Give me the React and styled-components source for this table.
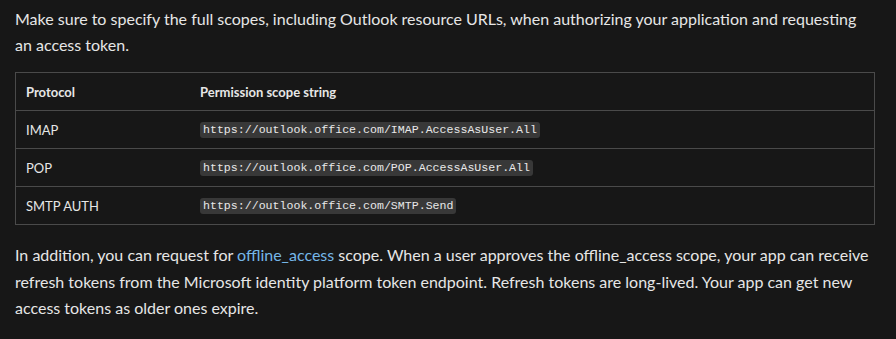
import React from "react";
import styled, { createGlobalStyle } from "styled-components";

const GlobalStyle = createGlobalStyle`
  body {
    margin: 0;
    background: #171717;
    color: #e6e6e6;
    font-family: "Lato", "Liberation Sans", sans-serif;
  }
`;

const Page = styled.main`
  width: 860px;
  padding: 6px 0 0 15px;
`;

const Para = styled.p`
  margin: 0;
  font-size: 16px;
  line-height: ${(p) => p.$lh || "26px"};
`;

const Link = styled.a`
  color: #75b6e7;
  text-decoration: none;
`;

const Table = styled.div`
  display: grid;
  grid-template-columns: 174px 1fr;
  border: 1px solid #4a4a4a;
  border-bottom: none;
  margin: 14px 0 17px;
  font-size: 13px;
`;

const Cell = styled.div`
  display: flex;
  align-items: center;
  height: 37px;
  padding-left: 10px;
  border-bottom: 1px solid #4a4a4a;
  font-weight: ${(p) => (p.$head ? 700 : 400)};
`;

const Code = styled.code`
  font-family: "Liberation Mono", "DejaVu Sans Mono", monospace;
  font-size: 11.6px;
  line-height: 12px;
  padding: 2px 3px;
  background: #383838;
  border-radius: 3px;
  color: #e8e8e8;
`;

const rows = [
  ["IMAP", "https://outlook.office.com/IMAP.AccessAsUser.All"],
  ["POP", "https://outlook.office.com/POP.AccessAsUser.All"],
  ["SMTP AUTH", "https://outlook.office.com/SMTP.Send"],
];

export default function App() {
  return (
    <>
      <GlobalStyle />
      <Page>
        <Para>
          Make sure to specify the full scopes, including Outlook resource URLs, when authorizing
          your application and requesting an access token.
        </Para>
        <Table>
          <Cell $head>Protocol</Cell>
          <Cell $head>Permission scope string</Cell>
          {rows.map(([proto, scope]) => (
            <React.Fragment key={proto}>
              <Cell>{proto}</Cell>
              <Cell>
                <Code>{scope}</Code>
              </Cell>
            </React.Fragment>
          ))}
        </Table>
        <Para $lh="26.5px">
          In addition, you can request for <Link href="#">offline_access</Link> scope. When a user
          approves the offline_access scope, your app can receive refresh tokens from the Microsoft
          identity platform token endpoint. Refresh tokens are long-lived. Your app can get new
          access tokens as older ones expire.
        </Para>
      </Page>
    </>
  );
}
